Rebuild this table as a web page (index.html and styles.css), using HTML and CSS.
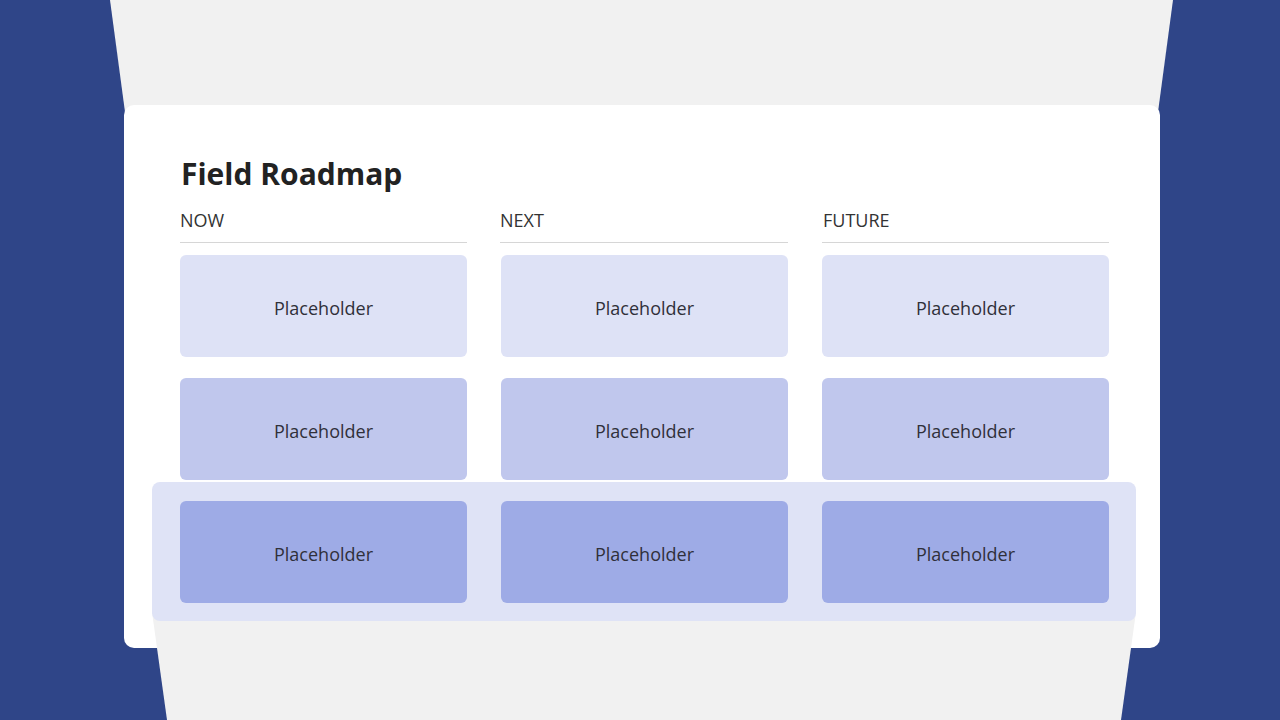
FILE: index.html
```html
<!DOCTYPE html>
<html lang="en">
<head>
<meta charset="utf-8">
<title>Field Roadmap</title>
<link rel="stylesheet" href="styles.css">
</head>
<body>
<div class="stage">
  <svg class="deco deco-top" width="1280" height="720" viewBox="0 0 1280 720" aria-hidden="true">
    <polygon points="110,0 1173,0 1158,112 125,112" fill="#F1F1F1"/>
  </svg>
  <section class="card">
    <h1 class="title">Field Roadmap</h1>
    <div class="grid heads">
      <div class="head">NOW</div>
      <div class="head">NEXT</div>
      <div class="head">FUTURE</div>
    </div>
    <div class="grid row">
      <div class="tile t1">Placeholder</div>
      <div class="tile t1">Placeholder</div>
      <div class="tile t1">Placeholder</div>
    </div>
    <div class="grid row">
      <div class="tile t2">Placeholder</div>
      <div class="tile t2">Placeholder</div>
      <div class="tile t2">Placeholder</div>
    </div>
    <div class="grid band">
      <div class="tile t3">Placeholder</div>
      <div class="tile t3">Placeholder</div>
      <div class="tile t3">Placeholder</div>
    </div>
  </section>
  <svg class="deco deco-bottom" width="1280" height="720" viewBox="0 0 1280 720" aria-hidden="true">
    <polygon points="152,612 1136,612 1121,720 167,720" fill="#F1F1F1"/>
  </svg>
</div>
</body>
</html>
```

FILE: styles.css
```css
* { box-sizing: border-box; }
html, body { margin: 0; padding: 0; }
body {
  background: #2F4588;
  font-family: "Open Sans", "Noto Sans", "Liberation Sans", sans-serif;
  color: #2B2B2B;
}
.stage {
  position: relative;
  width: 1280px;
  height: 720px;
  overflow: hidden;
  padding-top: 105px;
}
.deco {
  position: absolute;
  left: 0;
  top: 0;
  pointer-events: none;
}
.deco-bottom { z-index: 1; }
.card {
  position: relative;
  margin-left: 124px;
  width: 1036px;
  height: 543px;
  background: #FFFFFF;
  border-radius: 10px;
  padding: 49px 51px 0 56px;
}
.title {
  margin: 0 0 0 1px;
  font-size: 30px;
  line-height: 40px;
  font-weight: 700;
  color: #222222;
  height: 40px;
}
.grid {
  display: grid;
  grid-template-columns: 287px 287px 287px;
  column-gap: 34px;
}
.heads { margin-top: 14px; }
.head {
  font-size: 18px;
  line-height: 24px;
  color: #333333;
  padding-bottom: 10px;
  border-bottom: 1px solid #D6D6D6;
}
.head:nth-child(2) { margin-left: -1px; }
.head:nth-child(3) { padding-left: 1px; }
.row { margin-top: 12px; }
.row + .row { margin-top: 21px; }
.tile {
  height: 102px;
  border-radius: 6px;
  display: flex;
  align-items: center;
  justify-content: center;
  padding-top: 3px;
  font-size: 18px;
  color: #30303A;
}
.t1 { background: #DEE2F6; }
.t2 { background: #C0C7ED; }
.t3 { background: #9EABE6; }
.band {
  position: relative;
  z-index: 2;
  margin: 2px -27px 0 -28px;
  padding: 19px 27px 18px 28px;
  background: #DFE3F6;
  border-radius: 8px;
}
```
